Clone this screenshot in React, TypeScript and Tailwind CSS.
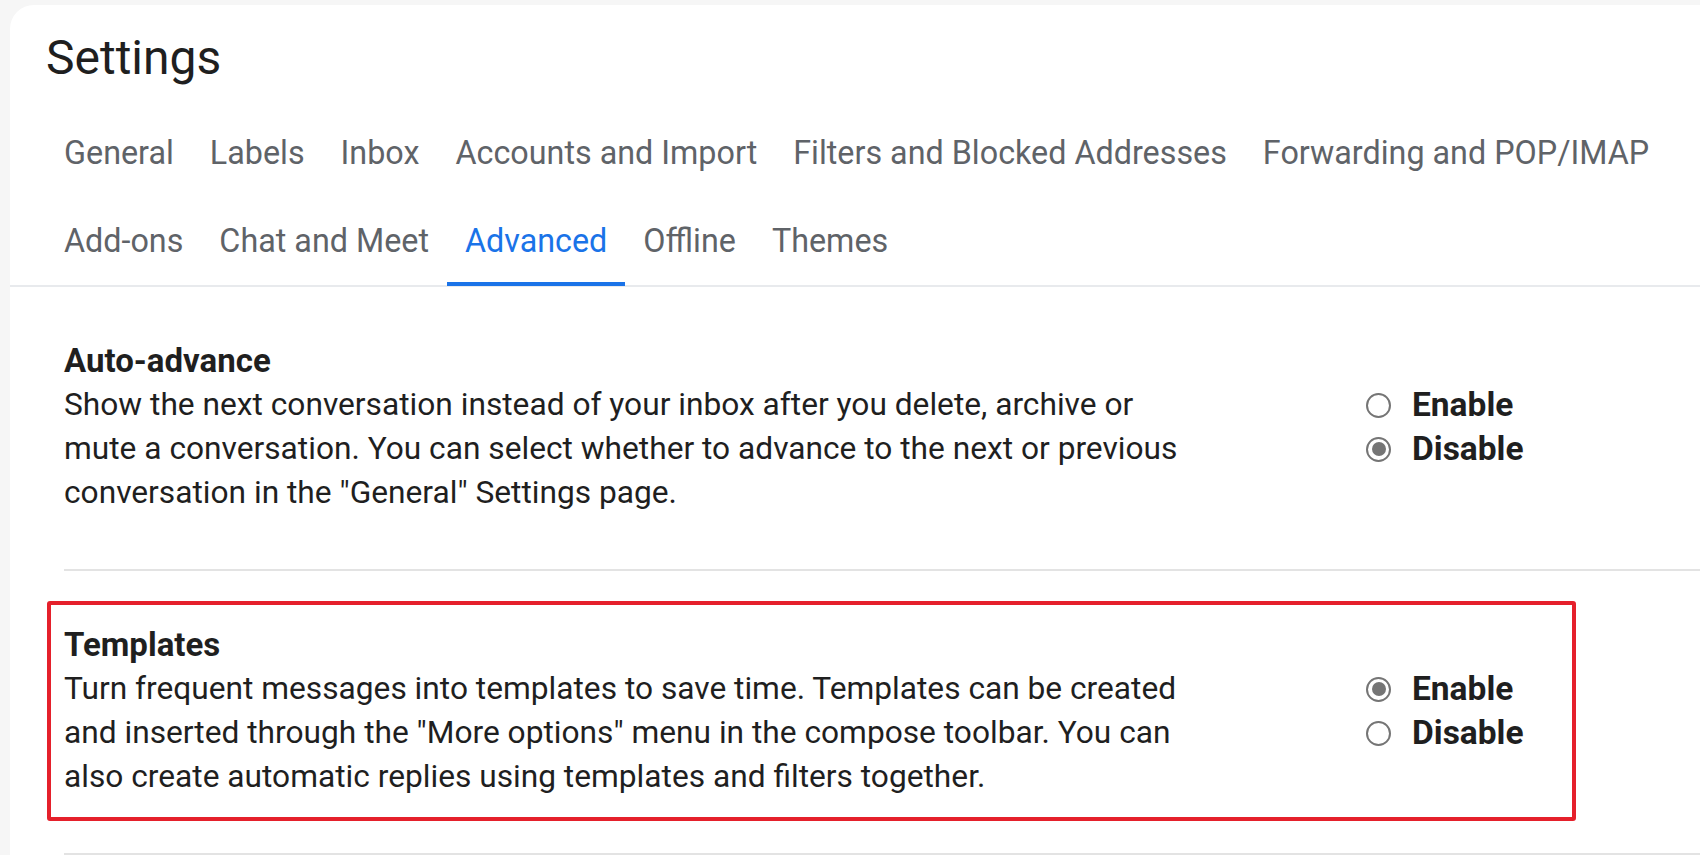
const TAB_ROWS = [
  "General",
  "Labels",
  "Inbox",
  "Accounts and Import",
  "Filters and Blocked Addresses",
  "Forwarding and POP/IMAP",
  "Add-ons",
  "Chat and Meet",
  "Advanced",
  "Offline",
  "Themes",
];

const ACTIVE_TAB = "Advanced";

const SECTIONS = [
  {
    title: "Auto-advance",
    lines: [
      "Show the next conversation instead of your inbox after you delete, archive or",
      "mute a conversation. You can select whether to advance to the next or previous",
      'conversation in the "General" Settings page.',
    ],
    enabled: false,
    highlight: false,
  },
  {
    title: "Templates",
    lines: [
      "Turn frequent messages into templates to save time. Templates can be created",
      'and inserted through the "More options" menu in the compose toolbar. You can',
      "also create automatic replies using templates and filters together.",
    ],
    enabled: true,
    highlight: true,
  },
];

function Radio({ checked, label }: { checked: boolean; label: string }) {
  return (
    <label className="flex items-center h-[44px] gap-[21px]">
      <span className="w-[25px] h-[25px] rounded-full border-[2.5px] border-[#757575] flex items-center justify-center shrink-0">
        {checked && <span className="w-[14px] h-[14px] rounded-full bg-[#757575]" />}
      </span>
      <span className="font-bold text-[#1f1f1f] text-[33.5px] leading-[44px]">{label}</span>
    </label>
  );
}

export default function App() {
  return (
    <div className="w-[1700px] h-[855px] overflow-hidden bg-[#f6f6f6] pl-[10px] pt-[5px] font-['Roboto',sans-serif]">
      <div className="bg-white rounded-tl-[24px] h-full">
        {/* header */}
        <h1 className="pl-[36px] pt-[25px] h-[104px] text-[48px] leading-[56px] text-[#1f1f1f]">
          Settings
        </h1>

        {/* tabs */}
        <nav className="flex flex-wrap pl-[36px] border-b-2 border-[#e8eaed]">
          {TAB_ROWS.map((t) => (
            <div
              key={t}
              className={
                t === ACTIVE_TAB
                  ? "relative h-[88px] px-[18px] flex items-center text-[32.3px] text-[#1a73e8]"
                  : "relative h-[88px] px-[18px] flex items-center text-[32.3px] text-[#5f6368]"
              }
            >
              {t}
              {t === ACTIVE_TAB && (
                <span className="absolute left-0 right-0 bottom-[-1px] h-[4px] bg-[#1a73e8]" />
              )}
            </div>
          ))}
        </nav>

        {/* settings rows */}
        <div className="pl-[54px]">
          {SECTIONS.map((s) => (
            <div
              key={s.title}
              className="relative flex items-center pt-[52px] pb-[54px] border-b-2 border-[#e3e3e3]"
            >
              {s.highlight && (
                <div className="absolute left-[-17px] top-[30px] bottom-[32px] w-[1529px] border-4 border-[#e5202b] rounded-[3px] pointer-events-none" />
              )}
              <div className="w-[1302px] shrink-0 text-[#1f1f1f] text-[31.7px] leading-[44px]">
                <div className="font-bold text-[33px]">{s.title}</div>
                {s.lines.map((l) => (
                  <div key={l} className="whitespace-nowrap">
                    {l}
                  </div>
                ))}
              </div>
              <div className="flex flex-col">
                <Radio checked={s.enabled} label="Enable" />
                <Radio checked={!s.enabled} label="Disable" />
              </div>
            </div>
          ))}
        </div>
      </div>
    </div>
  );
}
